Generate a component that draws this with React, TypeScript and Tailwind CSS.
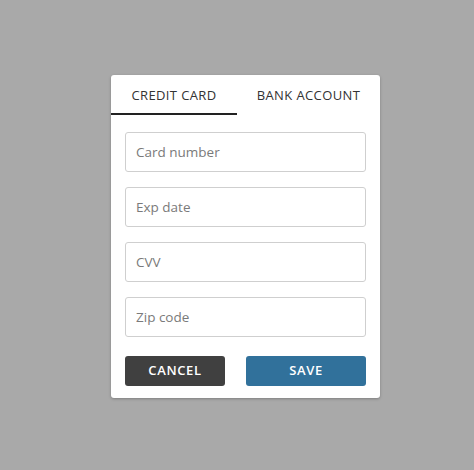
import React, { useState } from 'react';

const fields = ['Card number', 'Exp date', 'CVV', 'Zip code'];

const PaymentForm: React.FC = () => {
  const [tab, setTab] = useState<'card' | 'bank'>('card');

  return (
    <div className="w-[269px] bg-white rounded-[3px] shadow-[0_1px_3px_rgba(0,0,0,0.25)]">
      <div className="flex h-10">
        <button
          onClick={() => setTab('card')}
          className={`w-[126px] pt-[4px] text-[13px] tracking-[0.03em] text-[#333] ${
            tab === 'card' ? 'border-b-2 border-[#222]' : 'border-b-2 border-transparent'
          }`}
        >
          CREDIT CARD
        </button>
        <button
          onClick={() => setTab('bank')}
          className={`flex-1 pt-[4px] text-[13px] tracking-[0.03em] text-[#333] ${
            tab === 'bank' ? 'border-b-2 border-[#222]' : 'border-b-2 border-transparent'
          }`}
        >
          BANK ACCOUNT
        </button>
      </div>

      <div className="px-[14px] pt-[17px] pb-3 flex flex-col gap-[15px]">
        {fields.map((f) => (
          <input
            key={f}
            type="text"
            placeholder={f}
            className="h-10 w-full rounded-[3px] border border-[#cfcfcf] px-[10px] text-[13.5px] text-[#444] placeholder:text-[#7a7a7a] focus:outline-none"
          />
        ))}

        <div className="flex justify-between pt-[4px]">
          <button className="w-[100px] h-[30px] rounded-[3px] bg-[#404040] text-white text-[13px] font-semibold tracking-[0.05em]">
            CANCEL
          </button>
          <button className="w-[120px] h-[30px] rounded-[3px] bg-[#31719b] text-white text-[13px] font-semibold tracking-[0.05em]">
            SAVE
          </button>
        </div>
      </div>
    </div>
  );
};

export default function App() {
  return (
    <div
      className="w-[474px] h-[470px] bg-[#a9a9a9] pt-[75px] pl-[111px]"
      style={{ fontFamily: '"Open Sans", sans-serif' }}
    >
      <PaymentForm />
    </div>
  );
}
